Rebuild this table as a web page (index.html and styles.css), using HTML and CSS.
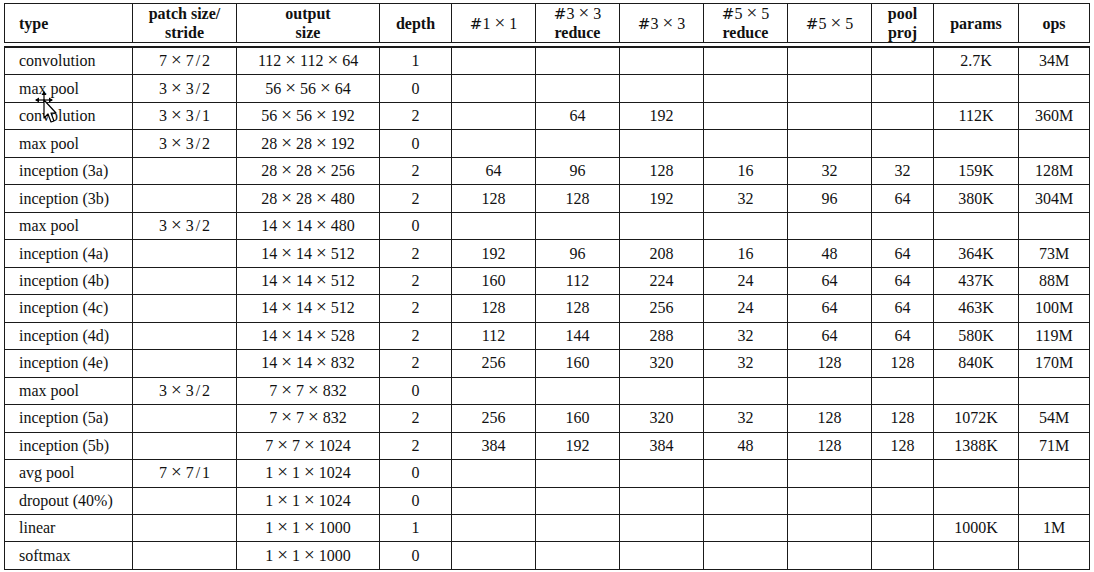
FILE: index.html
```html
<!DOCTYPE html>
<html>
<head>
<meta charset="utf-8">
<link rel="stylesheet" href="styles.css">
</head>
<body>
<div class="page">
<table class="net">
<colgroup>
<col class="c-type"><col class="c-patch"><col class="c-out"><col class="c-depth">
<col class="c-n"><col class="c-n"><col class="c-n"><col class="c-n"><col class="c-n">
<col class="c-pool"><col class="c-params"><col class="c-ops">
</colgroup>
<thead>
<tr>
<th class="first">type</th>
<th>patch size/<br>stride</th>
<th>output<br>size</th>
<th>depth</th>
<th><span class="m"><span class="h">#</span>1<span class="x">×</span>1</span></th>
<th><span class="m"><span class="h">#</span>3<span class="x">×</span>3</span><br>reduce</th>
<th><span class="m"><span class="h">#</span>3<span class="x">×</span>3</span></th>
<th><span class="m"><span class="h">#</span>5<span class="x">×</span>5</span><br>reduce</th>
<th><span class="m"><span class="h">#</span>5<span class="x">×</span>5</span></th>
<th>pool<br>proj</th>
<th>params</th>
<th>ops</th>
</tr>
<tr class="gap"><td colspan="12"></td></tr>
</thead>
<tbody>
<tr><td class="first">convolution</td><td class="m">7<span class="x">×</span>7<span class="s">/</span>2</td><td class="m">112<span class="x">×</span>112<span class="x">×</span>64</td><td>1</td><td></td><td></td><td></td><td></td><td></td><td></td><td>2.7K</td><td>34M</td></tr>
<tr><td class="first">max pool</td><td class="m">3<span class="x">×</span>3<span class="s">/</span>2</td><td class="m">56<span class="x">×</span>56<span class="x">×</span>64</td><td>0</td><td></td><td></td><td></td><td></td><td></td><td></td><td></td><td></td></tr>
<tr><td class="first">convolution</td><td class="m">3<span class="x">×</span>3<span class="s">/</span>1</td><td class="m">56<span class="x">×</span>56<span class="x">×</span>192</td><td>2</td><td></td><td>64</td><td>192</td><td></td><td></td><td></td><td>112K</td><td>360M</td></tr>
<tr><td class="first">max pool</td><td class="m">3<span class="x">×</span>3<span class="s">/</span>2</td><td class="m">28<span class="x">×</span>28<span class="x">×</span>192</td><td>0</td><td></td><td></td><td></td><td></td><td></td><td></td><td></td><td></td></tr>
<tr><td class="first">inception (3a)</td><td></td><td class="m">28<span class="x">×</span>28<span class="x">×</span>256</td><td>2</td><td>64</td><td>96</td><td>128</td><td>16</td><td>32</td><td>32</td><td>159K</td><td>128M</td></tr>
<tr><td class="first">inception (3b)</td><td></td><td class="m">28<span class="x">×</span>28<span class="x">×</span>480</td><td>2</td><td>128</td><td>128</td><td>192</td><td>32</td><td>96</td><td>64</td><td>380K</td><td>304M</td></tr>
<tr><td class="first">max pool</td><td class="m">3<span class="x">×</span>3<span class="s">/</span>2</td><td class="m">14<span class="x">×</span>14<span class="x">×</span>480</td><td>0</td><td></td><td></td><td></td><td></td><td></td><td></td><td></td><td></td></tr>
<tr><td class="first">inception (4a)</td><td></td><td class="m">14<span class="x">×</span>14<span class="x">×</span>512</td><td>2</td><td>192</td><td>96</td><td>208</td><td>16</td><td>48</td><td>64</td><td>364K</td><td>73M</td></tr>
<tr><td class="first">inception (4b)</td><td></td><td class="m">14<span class="x">×</span>14<span class="x">×</span>512</td><td>2</td><td>160</td><td>112</td><td>224</td><td>24</td><td>64</td><td>64</td><td>437K</td><td>88M</td></tr>
<tr><td class="first">inception (4c)</td><td></td><td class="m">14<span class="x">×</span>14<span class="x">×</span>512</td><td>2</td><td>128</td><td>128</td><td>256</td><td>24</td><td>64</td><td>64</td><td>463K</td><td>100M</td></tr>
<tr><td class="first">inception (4d)</td><td></td><td class="m">14<span class="x">×</span>14<span class="x">×</span>528</td><td>2</td><td>112</td><td>144</td><td>288</td><td>32</td><td>64</td><td>64</td><td>580K</td><td>119M</td></tr>
<tr><td class="first">inception (4e)</td><td></td><td class="m">14<span class="x">×</span>14<span class="x">×</span>832</td><td>2</td><td>256</td><td>160</td><td>320</td><td>32</td><td>128</td><td>128</td><td>840K</td><td>170M</td></tr>
<tr><td class="first">max pool</td><td class="m">3<span class="x">×</span>3<span class="s">/</span>2</td><td class="m">7<span class="x">×</span>7<span class="x">×</span>832</td><td>0</td><td></td><td></td><td></td><td></td><td></td><td></td><td></td><td></td></tr>
<tr><td class="first">inception (5a)</td><td></td><td class="m">7<span class="x">×</span>7<span class="x">×</span>832</td><td>2</td><td>256</td><td>160</td><td>320</td><td>32</td><td>128</td><td>128</td><td>1072K</td><td>54M</td></tr>
<tr><td class="first">inception (5b)</td><td></td><td class="m">7<span class="x">×</span>7<span class="x">×</span>1024</td><td>2</td><td>384</td><td>192</td><td>384</td><td>48</td><td>128</td><td>128</td><td>1388K</td><td>71M</td></tr>
<tr><td class="first">avg pool</td><td class="m">7<span class="x">×</span>7<span class="s">/</span>1</td><td class="m">1<span class="x">×</span>1<span class="x">×</span>1024</td><td>0</td><td></td><td></td><td></td><td></td><td></td><td></td><td></td><td></td></tr>
<tr><td class="first">dropout (40%)</td><td></td><td class="m">1<span class="x">×</span>1<span class="x">×</span>1024</td><td>0</td><td></td><td></td><td></td><td></td><td></td><td></td><td></td><td></td></tr>
<tr><td class="first">linear</td><td></td><td class="m">1<span class="x">×</span>1<span class="x">×</span>1000</td><td>1</td><td></td><td></td><td></td><td></td><td></td><td></td><td>1000K</td><td>1M</td></tr>
<tr><td class="first">softmax</td><td></td><td class="m">1<span class="x">×</span>1<span class="x">×</span>1000</td><td>0</td><td></td><td></td><td></td><td></td><td></td><td></td><td></td><td></td></tr>
</tbody>
</table>
<svg class="cursor" width="30" height="40" viewBox="0 0 30 40">
  <g stroke="#000" stroke-width="1.2" fill="none">
    <line x1="4" y1="12" x2="20" y2="12"/>
    <line x1="12" y1="4" x2="12" y2="14"/>
  </g>
  <polygon points="3,12 7,9.5 7,14.5" fill="#000"/>
  <polygon points="21,12 17,9.5 17,14.5" fill="#000"/>
  <polygon points="12,3 9.5,7 14.5,7" fill="#000"/>
  <path d="M12 12 L12 30 L16 26 L19 34 L22 33 L19 25 L24 25 Z" fill="#fff" stroke="#000" stroke-width="1.2" stroke-linejoin="round"/>
</svg>
</div>
</body>
</html>
```

FILE: styles.css
```css
html, body {
  margin: 0;
  padding: 0;
  background: #fff;
}

.page {
  position: relative;
  padding: 3px 0 0 4px;
}

.net {
  border-collapse: collapse;
  table-layout: fixed;
  width: 1085px;
  font-family: "Liberation Serif", "Times New Roman", serif;
  font-size: 16px;
  color: #111;
}

.c-type { width: 128px; }
.c-patch { width: 104px; }
.c-out { width: 143px; }
.c-depth { width: 72px; }
.c-n { width: 84px; }
.c-pool { width: 62px; }
.c-params { width: 85px; }
.c-ops { width: 71px; }

.net th,
.net td {
  border: 1px solid #1a1a1a;
  padding: 0;
  text-align: center;
  vertical-align: middle;
  white-space: nowrap;
}

.net th {
  height: 37px;
  font-weight: bold;
  line-height: 19px;
}

.net th .m {
  font-weight: normal;
}

.net tr.gap td {
  border: none;
  height: 3px;
  line-height: 0;
  font-size: 0;
}

.net tbody tr:first-child td {
  border-top: 2px solid #1a1a1a;
}

.net tbody td {
  height: 26.47px;
  line-height: 18px;
}

.net .first {
  text-align: left;
  padding-left: 14px;
}

.m .x {
  margin: 0 4px;
  font-size: 19px;
  line-height: 10px;
}

.m .s {
  margin: 0 2px;
}

.m .h {
  font-family: "DejaVu Serif", serif;
  font-size: 15px;
  line-height: 10px;
}

.cursor {
  position: absolute;
  left: 32px;
  top: 88px;
}
```
